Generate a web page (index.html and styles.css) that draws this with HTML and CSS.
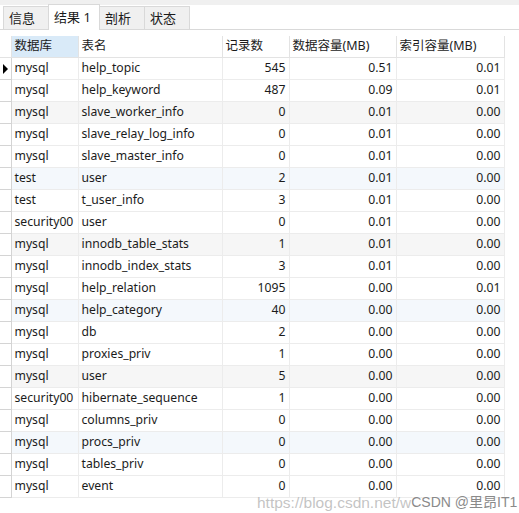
FILE: index.html
```html
<!DOCTYPE html>
<html>
<head>
<meta charset="utf-8">
<link rel="stylesheet" href="styles.css">
</head>
<body>
<div class="app">
  <div class="tabbar">
    <div class="tab">信息</div>
    <div class="tab active">结果 1</div>
    <div class="tab">剖析</div>
    <div class="tab">状态</div>
  </div>
  <div class="grid-wrap">
    <table class="grid">
      <colgroup>
        <col class="c-ind"><col class="c-db"><col class="c-name"><col class="c-rows"><col class="c-data"><col class="c-idx">
      </colgroup>
      <thead>
        <tr>
          <th class="ind"></th>
          <th class="sel">数据库</th>
          <th>表名</th>
          <th>记录数</th>
          <th>数据容量(MB)</th>
          <th>索引容量(MB)</th>
        </tr>
      </thead>
      <tbody>
        <tr><td class="ind"><span class="arrow"></span></td><td>mysql</td><td>help_topic</td><td class="num">545</td><td class="num">0.51</td><td class="num">0.01</td></tr>
        <tr><td class="ind"></td><td>mysql</td><td>help_keyword</td><td class="num">487</td><td class="num">0.09</td><td class="num">0.01</td></tr>
        <tr class="gray"><td class="ind"></td><td>mysql</td><td>slave_worker_info</td><td class="num">0</td><td class="num">0.01</td><td class="num">0.00</td></tr>
        <tr><td class="ind"></td><td>mysql</td><td>slave_relay_log_info</td><td class="num">0</td><td class="num">0.01</td><td class="num">0.00</td></tr>
        <tr><td class="ind"></td><td>mysql</td><td>slave_master_info</td><td class="num">0</td><td class="num">0.01</td><td class="num">0.00</td></tr>
        <tr class="blue"><td class="ind"></td><td>test</td><td>user</td><td class="num">2</td><td class="num">0.01</td><td class="num">0.00</td></tr>
        <tr><td class="ind"></td><td>test</td><td>t_user_info</td><td class="num">3</td><td class="num">0.01</td><td class="num">0.00</td></tr>
        <tr><td class="ind"></td><td>security00</td><td>user</td><td class="num">0</td><td class="num">0.01</td><td class="num">0.00</td></tr>
        <tr class="gray"><td class="ind"></td><td>mysql</td><td>innodb_table_stats</td><td class="num">1</td><td class="num">0.01</td><td class="num">0.00</td></tr>
        <tr><td class="ind"></td><td>mysql</td><td>innodb_index_stats</td><td class="num">3</td><td class="num">0.01</td><td class="num">0.00</td></tr>
        <tr><td class="ind"></td><td>mysql</td><td>help_relation</td><td class="num">1095</td><td class="num">0.00</td><td class="num">0.01</td></tr>
        <tr class="blue"><td class="ind"></td><td>mysql</td><td>help_category</td><td class="num">40</td><td class="num">0.00</td><td class="num">0.00</td></tr>
        <tr><td class="ind"></td><td>mysql</td><td>db</td><td class="num">2</td><td class="num">0.00</td><td class="num">0.00</td></tr>
        <tr><td class="ind"></td><td>mysql</td><td>proxies_priv</td><td class="num">1</td><td class="num">0.00</td><td class="num">0.00</td></tr>
        <tr class="gray"><td class="ind"></td><td>mysql</td><td>user</td><td class="num">5</td><td class="num">0.00</td><td class="num">0.00</td></tr>
        <tr><td class="ind"></td><td>security00</td><td>hibernate_sequence</td><td class="num">1</td><td class="num">0.00</td><td class="num">0.00</td></tr>
        <tr><td class="ind"></td><td>mysql</td><td>columns_priv</td><td class="num">0</td><td class="num">0.00</td><td class="num">0.00</td></tr>
        <tr class="blue"><td class="ind"></td><td>mysql</td><td>procs_priv</td><td class="num">0</td><td class="num">0.00</td><td class="num">0.00</td></tr>
        <tr><td class="ind"></td><td>mysql</td><td>tables_priv</td><td class="num">0</td><td class="num">0.00</td><td class="num">0.00</td></tr>
        <tr><td class="ind"></td><td>mysql</td><td>event</td><td class="num">0</td><td class="num">0.00</td><td class="num">0.00</td></tr>
      </tbody>
    </table>
    <div class="watermark">
      <span class="url">https://blog.csdn.net/w</span>
      <span class="brand">CSDN @里昂IT1</span>
    </div>
  </div>
</div>
</body>
</html>
```

FILE: styles.css
```css
* { box-sizing: border-box; }
html, body { margin: 0; padding: 0; background: #fff; }
body {
  font-family: "Noto Sans", "Noto Sans CJK SC", sans-serif;
  font-size: 12.2px;
  color: #1b1b1b;
  width: 519px;
  height: 513px;
  overflow: hidden;
}
.app { background: #fff; }
.tabbar {
  display: flex;
  align-items: flex-end;
  height: 30px;
  padding: 5px 0 0 3px;
  background: linear-gradient(#f0f0f0 0, #f0f0f0 5px, #fff 5px);
  border-bottom: 1px solid #d9d9d9;
}
.tab {
  height: 23px;
  width: 46px;
  margin-right: -1px;
  border: 1px solid #d9d9d9;
  border-bottom: none;
  background: #f0f0f0;
  display: flex;
  align-items: center;
  padding-left: 5px;
  font-size: 13px;
  line-height: 1;
}
.tab.active {
  width: 52px;
  background: #fff;
  margin-bottom: -1px;
  height: 26px;
  position: relative;
  z-index: 1;
}
.grid-wrap { position: relative; padding-top: 6px; }
.grid {
  border-collapse: collapse;
  table-layout: fixed;
  width: 504px;
}
.c-ind { width: 11px; }
.c-db { width: 67px; }
.c-name { width: 144px; }
.c-rows { width: 67px; }
.c-data { width: 107px; }
.c-idx { width: 108px; }
th, td {
  height: 22px;
  padding: 0 3px;
  border: 1px solid #ececec;
  white-space: nowrap;
  overflow: hidden;
  font-weight: normal;
  text-align: left;
  line-height: 20px;
}
th { height: 21px; border-color: #e3e3e3; border-top: none; font-size: 12.5px; }
th.sel { background: #d9eaf8; }
td.num { text-align: right; }
.ind { padding: 0; border-color: #d4d4d4; border-left: none; position: relative; }
th.ind { border-color: #e3e3e3; border-left: none; }
tr.gray td { background: #f6f6f6; }
tr.blue td { background: #f4f8fc; }
tr.gray td.ind, tr.blue td.ind { background: #fff; }
.arrow {
  position: absolute;
  left: 3px;
  top: 6px;
  width: 0; height: 0;
  border-top: 5px solid transparent;
  border-bottom: 5px solid transparent;
  border-left: 5px solid #000;
}
.watermark {
  position: absolute;
  left: 257px;
  top: 464px;
  width: 262px;
  height: 17px;
  display: flex;
  align-items: center;
  font-family: "Liberation Sans", "Noto Sans CJK SC", sans-serif;
  line-height: 17px;
  white-space: nowrap;
  overflow: hidden;
}
.url { color: rgba(185,185,185,0.85); font-size: 15.5px; }
.brand {
  color: #8a8a8a;
  font-size: 14px;
  text-shadow: 0 0 2px #fff, 0 0 2px #fff;
}
```
